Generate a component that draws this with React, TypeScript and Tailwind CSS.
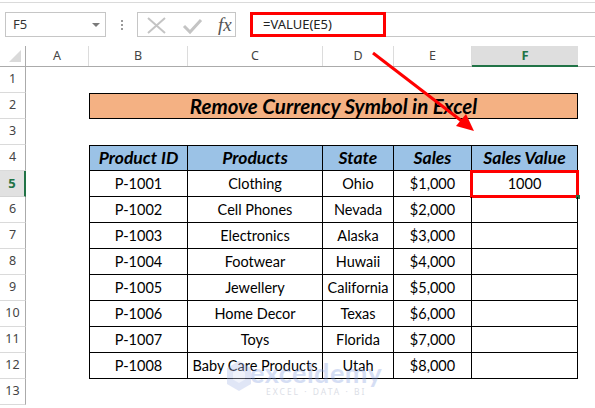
import React from 'react';

const cols = [
  { key: 'A', w: 'w-[63px]' },
  { key: 'B', w: 'w-[99px]' },
  { key: 'C', w: 'w-[135px]' },
  { key: 'D', w: 'w-[71px]' },
  { key: 'E', w: 'w-[78px]' },
  { key: 'F', w: 'w-[106px]' },
];

const rows = [
  ['P-1001', 'Clothing', 'Ohio', '$1,000', '1000'],
  ['P-1002', 'Cell Phones', 'Nevada', '$2,000', ''],
  ['P-1003', 'Electronics', 'Alaska', '$3,000', ''],
  ['P-1004', 'Footwear', 'Huwaii', '$4,000', ''],
  ['P-1005', 'Jewellery', 'California', '$5,000', ''],
  ['P-1006', 'Home Decor', 'Texas', '$6,000', ''],
  ['P-1007', 'Toys', 'Florida', '$7,000', ''],
  ['P-1008', 'Baby Care Products', 'Utah', '$8,000', ''],
];

const headers = ['Product ID', 'Products', 'State', 'Sales', 'Sales Value'];
const tableWidths = ['w-[99px]', 'w-[135px]', 'w-[71px]', 'w-[78px]', 'w-[106px]'];

const RowHead = ({ n, active }: { n: number; active?: boolean }) => (
  <div
    className={
      active
        ? 'w-[26px] shrink-0 flex items-center justify-center bg-[#e1e1e1] border-r-2 border-r-[#217346] border-b border-b-[#d4d4d4] text-[#217346] font-bold text-[13px]'
        : 'w-[26px] shrink-0 flex items-center justify-center border-r border-r-[#ababab] border-b border-b-[#dadada] text-[#444] text-[12.5px]'
    }
    style={{ fontFamily: '"Noto Sans", sans-serif' }}
  >
    {n}
  </div>
);

const ToolbarIcons = () => (
  <div className="w-[99px] shrink-0 border border-[#c6c6c6] flex items-center relative">
    <svg width="99" height="23" viewBox="0 0 99 23" className="absolute left-0 top-0">
      <path d="M10 5 L27 20 M27 5 L10 20" stroke="#c4c4c4" strokeWidth="2" fill="none" />
      <path d="M46 13 L52 19 L63 7" stroke="#c4c4c4" strokeWidth="3" fill="none" />
    </svg>
    <span
      className="absolute left-[80px] top-[0px] text-[19px] italic text-[#555] leading-[23px]"
      style={{ fontFamily: '"Liberation Serif", serif' }}
    >
      fx
    </span>
  </div>
);

const Watermark = () => (
  <div className="absolute left-[226px] top-[360px] flex items-start pointer-events-none opacity-35">
    <svg width="26" height="32" viewBox="0 0 26 32">
      <path d="M13 1 L25 8 L25 24 L13 31 L1 24 L1 8 Z" fill="#a9b9e8" />
      <path d="M13 9 L19 12.5 L19 19.5 L13 23 L7 19.5 L7 12.5 Z" fill="#d6def5" />
    </svg>
    <div className="flex flex-col items-center -ml-[2px]">
      <span
        className="text-[27px] font-bold leading-[26px] text-[#8aa2e0] tracking-[0.5px]"
        style={{ fontFamily: 'Lato, sans-serif' }}
      >
        exceldemy
      </span>
      <span
        className="text-[8.5px] leading-[10px] text-[#9aa4b8] tracking-[2px] mt-[1px]"
        style={{ fontFamily: '"Noto Sans", sans-serif' }}
      >
        EXCEL · DATA · BI
      </span>
    </div>
  </div>
);

export default function App() {
  const calibri = { fontFamily: 'Lato, "Open Sans", sans-serif' };
  return (
    <div className="w-[595px] h-[408px] bg-white relative overflow-hidden select-none">
      {/* formula bar */}
      <div className="h-[2px]" />
      <div className="h-px bg-[#dadada]" />
      <div className="flex h-[25px] mt-[9px]" style={{ fontFamily: '"Noto Sans", sans-serif' }}>
        <div className="ml-[5px] w-[101px] shrink-0 border border-[#c6c6c6] flex items-center justify-between pl-[7px] pr-[5px]">
          <span className="text-[13px] text-[#333]">F5</span>
          <span className="w-0 h-0 border-l-[4px] border-r-[4px] border-t-[4px] border-l-transparent border-r-transparent border-t-[#7a7a7a]" />
        </div>
        <div className="w-[31px] shrink-0 flex flex-col items-center justify-center gap-[2px]">
          <span className="w-[2px] h-[2px] bg-[#9a9a9a]" />
          <span className="w-[2px] h-[2px] bg-[#9a9a9a]" />
          <span className="w-[2px] h-[2px] bg-[#9a9a9a]" />
        </div>
        <ToolbarIcons />
        <div className="ml-[14px] flex-1 flex border-y border-l border-[#c6c6c6]">
          <div className="w-[136px] -my-px -ml-px border-[3px] border-[#ff0000] flex items-center pl-[10px] text-[13px] text-[#222]">
            =VALUE(E5)
          </div>
        </div>
      </div>

      {/* column headers */}
      <div
        className="flex h-[21px] mt-[9px] border-b border-[#ababab] text-[12.5px] text-[#444]"
        style={{ fontFamily: '"Noto Sans", sans-serif' }}
      >
        <div className="w-[26px] shrink-0 border-r border-[#ababab] relative">
          <svg width="14" height="14" viewBox="0 0 14 14" className="absolute right-[3px] bottom-[3px]">
            <path d="M13 1 L13 13 L1 13 Z" fill="#dadada" />
          </svg>
        </div>
        {cols.map((c) =>
          c.key === 'F' ? (
            <div
              key={c.key}
              className={`${c.w} shrink-0 flex items-center justify-center bg-[#dedede] border-b-2 border-[#217346] -mb-px text-[#217346] font-bold text-[13px]`}
            >
              {c.key}
            </div>
          ) : (
            <div key={c.key} className={`${c.w} shrink-0 flex items-center justify-center border-r border-[#dcdcdc]`}>
              {c.key}
            </div>
          )
        )}
        <div className="flex-1" />
      </div>

      {/* sheet rows */}
      <div style={calibri} className="text-[14.5px] text-black">
        <div className="flex h-[26px]">
          <RowHead n={1} />
        </div>
        <div className="flex h-[26px]">
          <RowHead n={2} />
          <div className="w-[63px] shrink-0" />
          <div className="w-[489px] shrink-0 border border-black bg-[#f4b183] flex items-center justify-center font-bold italic text-[20.5px] pt-px">
            Remove Currency Symbol in Excel
          </div>
        </div>
        <div className="flex h-[26px]">
          <RowHead n={3} />
        </div>
        <div className="flex h-[26px]">
          <RowHead n={4} />
          <div className="w-[63px] shrink-0" />
          {headers.map((h, i) => (
            <div
              key={h}
              className={`${tableWidths[i]} shrink-0 border-t border-b border-r border-black ${i === 0 ? 'border-l' : ''} bg-[#9bc2e6] flex items-center justify-center font-bold italic text-[17.5px] pt-px`}
            >
              {h}
            </div>
          ))}
        </div>
        {rows.map((r, ri) => (
          <div key={r[0]} className="flex h-[26px]">
            <RowHead n={ri + 5} active={ri === 0} />
            <div className="w-[63px] shrink-0" />
            {r.map((v, i) => (
              <div
                key={i}
                className={`${tableWidths[i]} shrink-0 border-b border-r border-black ${i === 0 ? 'border-l' : ''} flex items-center justify-center pt-[1px] relative`}
              >
                {v}
                {ri === 0 && i === 4 && (
                  <>
                    <span className="absolute -left-[2px] -right-[2px] -top-[1px] -bottom-[2px] border-[3px] border-[#ff0000] pointer-events-none" />
                    <span className="absolute -right-[3px] -bottom-[3px] w-[4px] h-[4px] bg-[#217346]" />
                  </>
                )}
              </div>
            ))}
          </div>
        ))}
        <div className="flex h-[26px]">
          <RowHead n={13} />
        </div>
      </div>

      <Watermark />

      {/* annotation arrow */}
      <svg width="595" height="408" viewBox="0 0 595 408" className="absolute left-0 top-0 pointer-events-none">
        <line x1="373" y1="53" x2="463" y2="122" stroke="#ff0000" strokeWidth="3" />
        <path d="M474 131 L456 126 L466 114 Z" fill="#ff0000" />
      </svg>
    </div>
  );
}
